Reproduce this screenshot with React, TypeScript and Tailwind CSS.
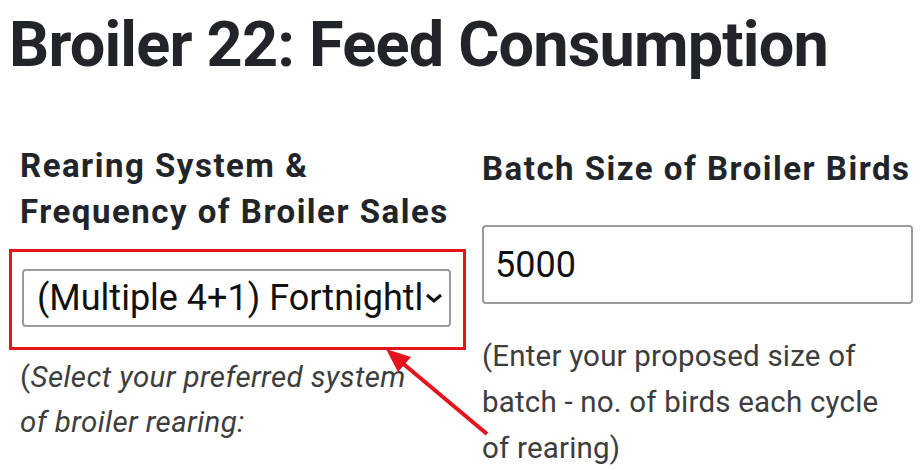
const App = () => (
  <main
    className="relative h-[470px] w-[924px] overflow-hidden bg-white text-[#212529]"
    style={{ fontFamily: 'Roboto, "Liberation Sans", sans-serif' }}
  >
    <h1 className="pt-[7px] pl-[9px] text-[63px] leading-[1.2] font-bold tracking-[-0.8px]">
      Broiler 22: Feed Consumption
    </h1>

    <div className="mt-[60px] grid grid-cols-2 gap-[31px] pr-[11px] pl-[20px]">
      <div>
        <h2 className="text-[33px] leading-[46.5px] font-bold tracking-[1.5px] whitespace-nowrap">
          Rearing System &amp;
          <br />
          Frequency of Broiler Sales
        </h2>
        <div className="mt-[33px] ml-[2px] flex h-[58px] items-center overflow-hidden rounded-[4px] border-2 border-[#9a9a9a] pr-[6px] pl-[13px]">
          <span className="flex-1 overflow-hidden text-[36px] whitespace-nowrap text-[#111]">
            (Multiple 4+1) Fortnightly sales
          </span>
          <svg width="18" height="12" viewBox="0 0 18 12" className="ml-[1px] shrink-0">
            <path d="M2 3l7 6 7-6" fill="none" stroke="#111" strokeWidth="3" />
          </svg>
        </div>
        <p className="mt-[28px] text-[29.5px] leading-[45px] tracking-[0.4px] whitespace-nowrap text-[#3d3d3d]">
          (<i>Select your preferred system</i>
          <br />
          <i>of broiler rearing:</i>
        </p>
      </div>

      <div>
        <h2 className="pt-[3px] text-[33px] leading-[46.5px] font-bold tracking-[1.5px] whitespace-nowrap">
          Batch Size of Broiler Birds
        </h2>
        <div className="mt-[33px] flex h-[79px] items-center rounded-[4px] border-2 border-[#9a9a9a] px-[11px] text-[36px] text-[#111]">
          5000
        </div>
        <p className="mt-[29px] text-[29.5px] leading-[46px] tracking-[0.2px] whitespace-nowrap text-[#3d3d3d]">
          (Enter your proposed size of
          <br />
          batch - no. of birds each cycle
          <br />
          of rearing)
        </p>
      </div>
    </div>

    {/* annotation: red frame + arrow */}
    <div className="pointer-events-none absolute top-[249px] left-[9px] h-[101px] w-[457px] border-[3px] border-[#e3141c]" />
    <svg
      className="pointer-events-none absolute inset-0"
      width="924"
      height="470"
      viewBox="0 0 924 470"
    >
      <line x1="487" y1="434" x2="400" y2="361" stroke="#e3141c" strokeWidth="4" />
      <polygon points="386,349 411,357 398,372" fill="#e3141c" />
    </svg>
  </main>
);

export default App;
